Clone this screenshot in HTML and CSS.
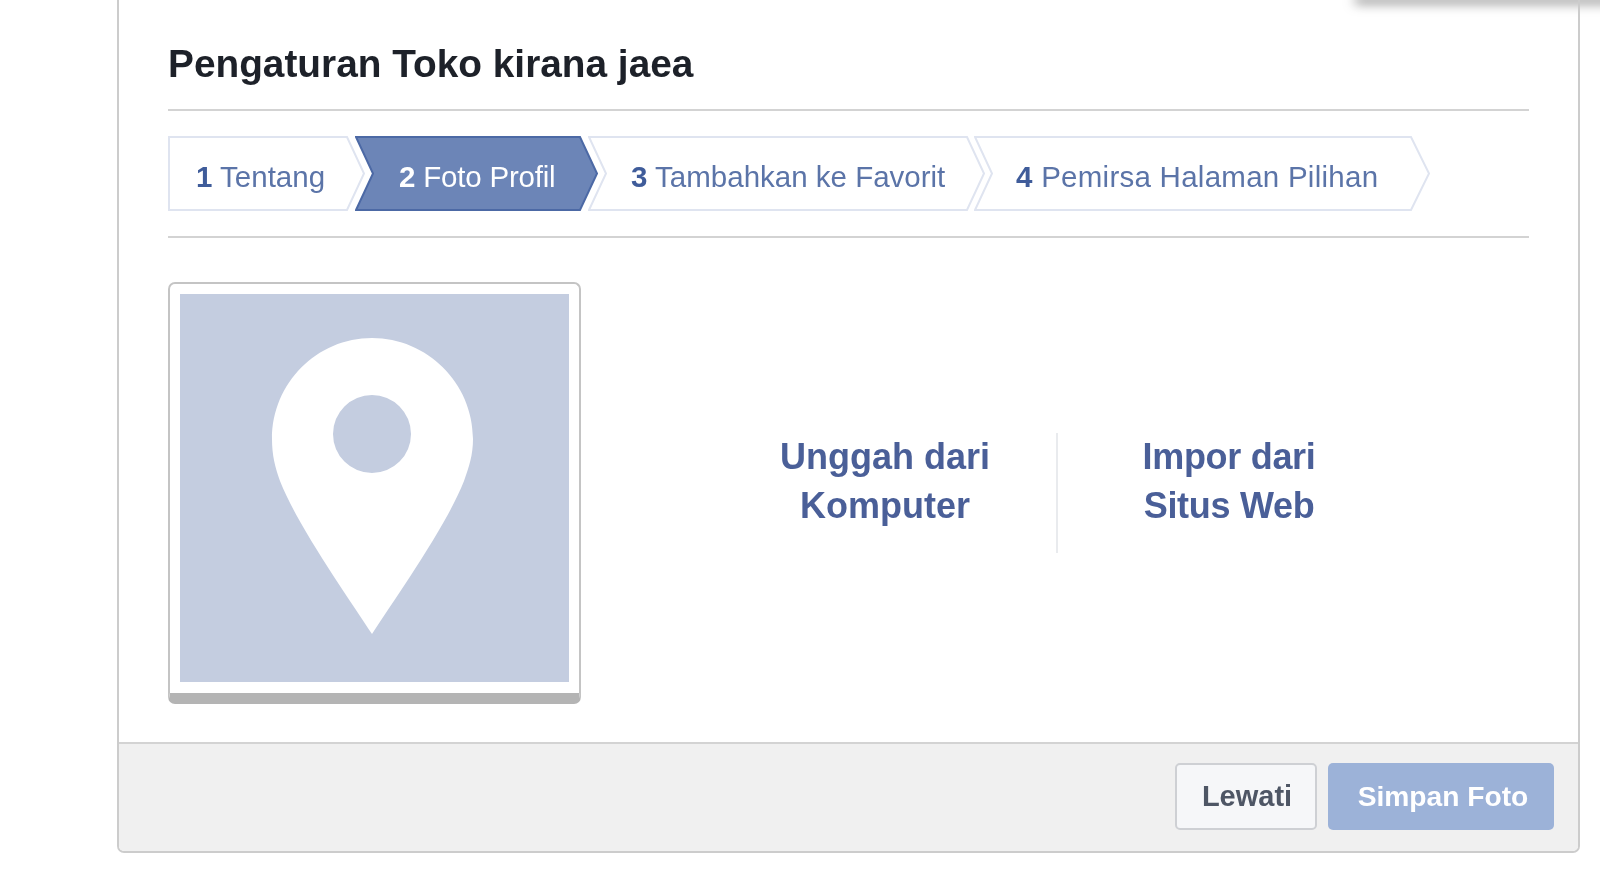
FILE: index.html
```html
<!DOCTYPE html>
<html lang="id">
<head>
<meta charset="utf-8">
<title>Pengaturan Toko kirana jaea</title>
<link rel="stylesheet" href="styles.css">
</head>
<body>
<div class="menu-shadow"></div>
<section class="panel">
  <div class="content">
    <h1 class="title">Pengaturan Toko kirana jaea</h1>
    <ol class="steps">
      <li class="step step-1">
        <svg class="step-shape" viewBox="0 0 204 75" preserveAspectRatio="none"><path class="outline" d="M1 1H179L196 37.500L179 74H1Z"/></svg>
        <b>1</b> Tentang
      </li>
      <li class="step step-2 active">
        <svg class="step-shape" viewBox="0 0 243 75" preserveAspectRatio="none"><path class="fill" d="M1 1H225L242 37.500L225 74H1L18 37.500Z"/></svg>
        <b>2</b> Foto Profil
      </li>
      <li class="step step-3">
        <svg class="step-shape" viewBox="0 0 397 75" preserveAspectRatio="none"><path class="outline" d="M1 1H379L396 37.500L379 74H1L18 37.500Z"/></svg>
        <b>3</b> Tambahkan ke Favorit
      </li>
      <li class="step step-4">
        <svg class="step-shape" viewBox="0 0 456 75" preserveAspectRatio="none"><path class="outline" d="M1 1H437L455 37.500L437 74H1L18 37.500Z"/></svg>
        <b>4</b> Pemirsa Halaman Pilihan
      </li>
    </ol>
    <div class="photo-row">
      <div class="photo">
        <svg class="pin" viewBox="0 -1 389 388">
          <rect class="pin-bg" y="-1" width="389" height="388"/>
          <path class="pin-body" fill-rule="evenodd" d="M192 339C170 305 118 232 100 186C95 172 92 160 92 144C92 88 137 43 192 43C247 43 293 88 293 144C293 160 289 172 284 186C266 232 214 305 192 339ZM192 100A39 39 0 1 0 192 178A39 39 0 1 0 192 100Z"/>
        </svg>
      </div>
      <div class="actions">
        <a class="action" href="#">Unggah dari<br>Komputer</a>
        <a class="action action-import" href="#">Impor dari<br>Situs Web</a>
      </div>
    </div>
  </div>
  <footer class="footer">
    <button class="btn btn-skip" type="button">Lewati</button>
    <button class="btn btn-save" type="button">Simpan Foto</button>
  </footer>
</section>
</body>
</html>
```
FILE: styles.css
```css
html, body {
  margin: 0;
  height: 870px;
  overflow: hidden;
  background: #fff;
  font-family: "Liberation Sans", Arial, sans-serif;
}
.panel {
  width: 1463px;
  margin-left: 117px;
  box-sizing: border-box;
  border: 2px solid #ccc;
  border-top: 0;
  border-radius: 0 0 7px 7px;
  filter: blur(0.6px);
}
.content {
  padding: 0 49px 38px 49px;
}
.title {
  margin: 0;
  padding: 41px 0 22px;
  font-size: 38.800px;
  line-height: 46px;
  font-weight: bold;
  color: #1d2129;
  border-bottom: 2px solid #d3d3d3;
}
.steps {
  display: flex;
  list-style: none;
  margin: 25px 0;
  padding: 0;
  height: 75px;
}
.step {
  position: relative;
  box-sizing: border-box;
  height: 75px;
  line-height: 81px;
  font-size: 29.500px;
  color: #5b74a8;
  white-space: nowrap;
}
.step b {
  color: #3f5c9a;
}
.step-shape {
  position: absolute;
  left: 0;
  top: 0;
  width: 100%;
  height: 100%;
  z-index: -1;
}
.outline {
  fill: #fff;
  stroke: #dfe4f0;
  stroke-width: 2;
}
.fill {
  fill: #6c85b7;
  stroke: #4c69a5;
  stroke-width: 2;
}
.step-1 { width: 204px; padding-left: 28px; }
.step-2 { width: 243px; padding-left: 44px; margin-left: -17px; letter-spacing: -0.2px; }
.step-3 { width: 397px; padding-left: 43px; margin-left: -10px; }
.step-4 { width: 456px; padding-left: 42px; margin-left: -11px; letter-spacing: 0.26px; }
.active, .active b {
  color: #fff;
}
.photo-row {
  display: flex;
  padding-top: 44px;
  border-top: 2px solid #d3d3d3;
}
.photo {
  box-sizing: border-box;
  flex: none;
  width: 413px;
  height: 422px;
  padding: 10px 10px 11px;
  background: #fff;
  border: 2px solid #c4c4c4;
  border-bottom: 11px solid #b4b4b4;
  border-radius: 7px;
}
.pin {
  display: block;
  width: 389px;
  height: 388px;
}
.pin-bg { fill: #c4cde0; }
.pin-body { fill: #fff; }
.actions {
  display: flex;
  align-items: center;
  margin-left: 133px;
}
.action {
  box-sizing: border-box;
  width: 342px;
  height: 120px;
  padding-bottom: 25px;
  display: flex;
  align-items: center;
  justify-content: center;
  text-align: center;
  font-size: 36px;
  font-weight: bold;
  line-height: 49px;
  color: #4a5f98;
  text-decoration: none;
}
.action-import {
  width: 344px;
  letter-spacing: -0.3px;
  border-left: 2px solid #e9ebee;
}
.footer {
  display: flex;
  justify-content: flex-end;
  gap: 11px;
  padding: 19px 24px 21px;
  background: #f0f0f0;
  border-top: 2px solid #d3d3d3;
  border-radius: 0 0 5px 5px;
}
.btn {
  box-sizing: border-box;
  height: 67px;
  border-radius: 5px;
  font-family: inherit;
  font-size: 29px;
  font-weight: bold;
}
.btn-skip {
  width: 142px;
  padding: 0 0 0 2px;
  background: #f6f7f9;
  border: 2px solid #ced0d4;
  color: #4e5665;
}
.btn-save {
  width: 226px;
  padding: 0 0 0 4px;
  font-size: 28.200px;
  background: #9cb2d8;
  border: 0;
  color: #fff;
}
.menu-shadow {
  position: absolute;
  left: 1355px;
  top: -6px;
  width: 300px;
  height: 6px;
  background: #777;
  box-shadow: 0 3px 12px rgba(0, 0, 0, .55);
}
```
